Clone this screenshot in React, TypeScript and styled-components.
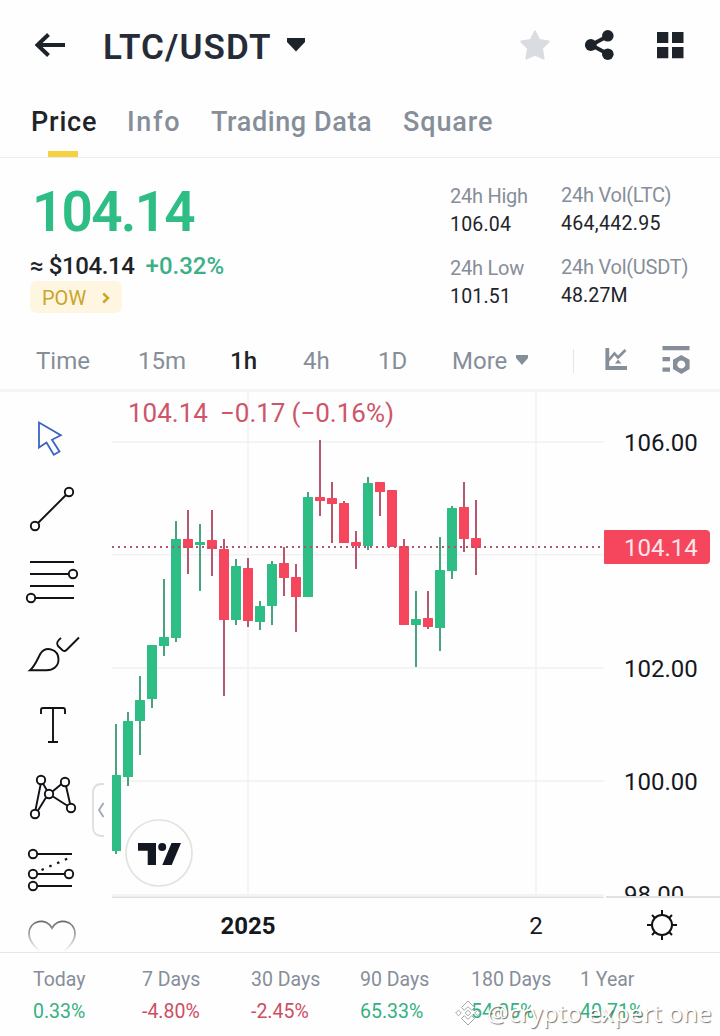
import React from "react";
import styled, { createGlobalStyle } from "styled-components";

const GREEN = "#2ebd85";
const RED = "#f6465d";
const INK = "#1e2329";
const MUTED = "#868e99";

const GlobalStyle = createGlobalStyle`
  * { box-sizing: border-box; }
  body { margin: 0; background: #fefefe; font-family: Roboto, "Liberation Sans", sans-serif; color: ${INK}; }
  svg { display: block; flex: none; }
`;

const Screen = styled.main`
  width: 720px;
  height: 1036px;
  overflow: hidden;
  display: flex;
  flex-direction: column;
  position: relative;
`;

/* ---------- header ---------- */
const Header = styled.header`
  height: 92px;
  display: flex;
  align-items: center;
  padding: 0 34px;
`;
const Pair = styled.h1`
  margin: 4px 0 0 37px;
  width: 181px;
  font-size: 35px;
  line-height: 40px;
  font-weight: 600;
  letter-spacing: 1.1px;
  color: #252c38;
  white-space: nowrap;
`;
const HeaderActions = styled.div`
  margin-left: auto;
  display: grid;
  grid-template-columns: 65px 70px 32px;
`;

/* ---------- tabs ---------- */
const Tabs = styled.nav`
  height: 66px;
  border-bottom: 1px solid #ececee;
  padding-left: 31px;
  display: grid;
  grid-template-columns: 96px 84px 192px auto;
`;
const Tab = styled.span<{ $active?: boolean; $ls: number }>`
  position: relative;
  justify-self: start;
  font-size: 27px;
  line-height: 60px;
  font-weight: 500;
  letter-spacing: ${(p) => p.$ls}px;
  color: ${(p) => (p.$active ? INK : MUTED)};
  &::after {
    content: "";
    display: ${(p) => (p.$active ? "block" : "none")};
    position: absolute;
    left: 17px;
    top: 59px;
    width: 30px;
    height: 6px;
    background: #f5d33f;
  }
`;

/* ---------- price overview ---------- */
const Overview = styled.section`
  height: 174px;
  padding: 20px 0 0 30px;
  display: grid;
  grid-template-columns: 420px 111px auto;
`;
const LastPrice = styled.div`
  font-size: 55px;
  line-height: 68px;
  font-weight: 600;
  font-stretch: 90%;
  letter-spacing: -1.8px;
  padding-left: 2px;
  color: ${GREEN};
`;
const FiatLine = styled.div`
  margin-top: 5px;
  height: 30px;
  line-height: 30px;
  font-size: 24px;
  font-weight: 500;
  display: flex;
  gap: 11px;
  white-space: nowrap;
`;
const Fiat = styled.span`
  letter-spacing: -0.4px;
`;
const Change = styled.span`
  color: #3db088;
`;
const PowTag = styled.div`
  width: 92px;
  height: 32px;
  border-radius: 7px;
  background: #fef6e0;
  color: #cba42b;
  font-size: 20px;
  display: flex;
  align-items: center;
  justify-content: space-between;
  padding: 1px 11px 0 12px;
`;
const StatColumn = styled.dl<{ $top: number }>`
  margin: 0;
  padding-top: ${(p) => p.$top}px;
  white-space: nowrap;
`;
const StatLabel = styled.dt`
  font-size: 20px;
  line-height: 28px;
  color: ${MUTED};
  letter-spacing: -0.25px;
`;
const StatValue = styled.dd<{ $ls?: number }>`
  margin: 1px 0 15px;
  font-size: 19.5px;
  line-height: 28px;
  letter-spacing: ${(p) => p.$ls ?? 0}px;
`;

/* ---------- time frames ---------- */
const Frames = styled.nav`
  height: 60px;
  padding-left: 36px;
  border-bottom: 3px solid #f5f5f5;
  display: grid;
  grid-template-columns: 102px 92px 73px 75px 74px 121px 29px 57px auto;
  align-items: center;
  font-size: 24px;
  color: ${MUTED};
`;
const Frame = styled.span<{ $active?: boolean }>`
  display: flex;
  align-items: center;
  gap: 8px;
  white-space: nowrap;
  font-weight: ${(p) => (p.$active ? 500 : 400)};
  color: ${(p) => (p.$active ? INK : MUTED)};
`;
const Divider = styled.i`
  width: 1px;
  height: 24px;
  background: #e3e5e8;
`;

/* ---------- chart ---------- */
const ChartArea = styled.section`
  height: 561px;
  border-bottom: 1px solid #e6e7e9;
  display: grid;
  grid-template-columns: 112px 492px 116px;
  grid-template-rows: 506px 54px;
`;
const Toolbar = styled.aside`
  grid-row: 1 / 3;
  padding: 10px 0 0 24px;
  overflow: hidden;
  position: relative;
`;
const Handle = styled.div`
  position: absolute;
  left: 91px;
  top: 390px;
`;
const Plot = styled.div`
  position: relative;
  overflow: hidden;
`;
const Quote = styled.div`
  position: absolute;
  left: 16px;
  top: 3px;
  font-size: 26px;
  line-height: 36px;
  color: #cd566a;
  white-space: nowrap;
  display: flex;
`;
const QuoteValue = styled.span<{ $gap?: number }>`
  margin-left: ${(p) => p.$gap ?? 0}px;
`;
const PriceAxis = styled.div`
  position: relative;
  overflow: hidden;
  margin-left: 2px;
  border-bottom: 2px solid #dfe1e2;
`;
const AxisPrice = styled.div`
  height: 113px;
  line-height: 113px;
  padding-left: 18px;
  font-size: 24px;
  color: #16181e;
  &:first-child { margin-top: -5px; }
`;
const PriceTagCell = styled.div`
  position: relative;
  display: grid;
`;
const PriceTag = styled.div`
  position: absolute;
  left: 0;
  top: 138px;
  width: 106px;
  height: 34px;
  line-height: 37px;
  padding-left: 20px;
  font-size: 24px;
  color: #fde6ea;
  background: ${RED};
  border-radius: 1px 4px 4px 1px;
`;
const TimeAxis = styled.div`
  display: grid;
  grid-template-columns: 272px 304px;
  margin-right: -84px;
  line-height: 57px;
  font-size: 24px;
  text-align: center;
  color: #16181e;
`;
const TimeMark = styled.span<{ $bold?: boolean }>`
  font-weight: ${(p) => (p.$bold ? 700 : 400)};
`;
const AxisSettings = styled.div`
  display: grid;
  place-items: center;
`;

/* ---------- performance footer ---------- */
const Performance = styled.footer`
  flex: 1;
  padding: 11px 0 0 33px;
  display: grid;
  grid-template-columns: 109px 109px 109px 111px 109px auto;
  grid-template-rows: 32px 32px;
  grid-auto-flow: column;
  line-height: 32px;
  white-space: nowrap;
`;
const Period = styled.span`
  font-size: 19.5px;
  color: ${MUTED};
`;
const Return = styled.span<{ $down?: boolean }>`
  font-size: 19.5px;
  color: ${(p) => (p.$down ? "#cd4e63" : "#36b083")};
`;
const Watermark = styled.div`
  position: absolute;
  left: 455px;
  top: 997px;
  height: 32px;
  display: flex;
  align-items: center;
  gap: 6px;
  font-family: "Noto Sans", sans-serif;
  font-size: 24px;
  letter-spacing: 0.2px;
  line-height: 32px;
  color: #fff;
  text-shadow: 1px 1px 1px rgba(70, 70, 70, 0.75);
  white-space: nowrap;
`;

type Candle = [dir: "u" | "d", high: number, top: number, bottom: number, low: number];
const candles: Candle[] = [
  ["u", 724, 775, 851, 854],
  ["u", 712, 721, 777, 786],
  ["u", 676, 700, 721, 755],
  ["u", 645, 645, 699, 708],
  ["u", 579, 637, 646, 656],
  ["u", 521, 539, 638, 642],
  ["d", 510, 539, 548, 574],
  ["u", 524, 542, 545, 591],
  ["d", 510, 540, 549, 576],
  ["d", 539, 549, 620, 696],
  ["u", 559, 566, 620, 625],
  ["d", 558, 568, 621, 627],
  ["u", 601, 606, 622, 630],
  ["u", 561, 564, 606, 625],
  ["d", 547, 563, 578, 596],
  ["d", 564, 577, 597, 632],
  ["u", 492, 497, 597, 597],
  ["d", 440, 497, 501, 516],
  ["d", 482, 498, 504, 543],
  ["d", 501, 503, 543, 543],
  ["d", 531, 542, 546, 569],
  ["u", 477, 483, 546, 550],
  ["d", 482, 482, 492, 516],
  ["d", 490, 490, 547, 547],
  ["d", 539, 546, 625, 625],
  ["u", 591, 619, 625, 667],
  ["d", 591, 618, 627, 629],
  ["u", 537, 570, 628, 651],
  ["u", 506, 508, 571, 579],
  ["d", 482, 507, 539, 552],
  ["d", 500, 538, 548, 575],
];

const CandleChart = () => (
  <svg width="492" height="506" viewBox="112 392 492 506">
    <g stroke="#f1f1f2" strokeWidth="1.4">
      {[442, 554.7, 668, 781, 895].map((y) => (
        <path key={y} d={`M112 ${y}H604`} />
      ))}
      <path d="M248 392V896M536 392V896" />
    </g>
    <path d="M112 897.5H603.5" stroke="#dcdedf" strokeWidth="1.8" />
    {candles.map(([dir, high, top, bottom, low], i) => {
      const x = 116 + i * 12;
      return (
        <g key={i}>
          <rect x={x - 1} y={high} width="2" height={low - high} fill={dir === "u" ? "#49a37d" : "#b5586d"} />
          <rect x={x - 5} y={top} width="10" height={bottom - top} rx="0.6" fill={dir === "u" ? GREEN : RED} />
        </g>
      );
    })}
    <path d="M112 547H602" stroke="#b0566a" strokeWidth="1.8" strokeDasharray="2 4" />
    <circle cx="159" cy="853" r="33" fill="#fefefe" stroke="#e1e2e2" strokeWidth="1.7" />
    <g fill="#131722">
      <path d="M138 843h18v22h-8.3v-14.3H138z" />
      <circle cx="162.2" cy="847" r="4" />
      <path d="M171.5 843h9.5l-9.3 22h-9.4z" />
    </g>
  </svg>
);

/* Each drawing tool fills a 60x72 slot of the side toolbar. */
const Tool = ({ slot, height = 72, children }: { slot: number; height?: number; children: React.ReactNode }) => (
  <svg
    width="60"
    height={height}
    viewBox={`24 ${402 + slot * 72} 60 ${height}`}
    fill="none"
    stroke="#101216"
    strokeWidth="1.9"
  >
    {children}
  </svg>
);

const tabs = [
  { label: "Price", ls: 0.8, active: true },
  { label: "Info", ls: 1.7 },
  { label: "Trading Data", ls: 0.6 },
  { label: "Square", ls: 0.9 },
];

const performance = [
  { period: "Today", value: "0.33%" },
  { period: "7 Days", value: "-4.80%", down: true },
  { period: "30 Days", value: "-2.45%", down: true },
  { period: "90 Days", value: "65.33%" },
  { period: "180 Days", value: "54.05%" },
  { period: "1 Year", value: "40.71%" },
];

export default function App() {
  return (
    <Screen>
      <GlobalStyle />
      <Header>
        <svg width="32" height="40" viewBox="34 26 32 40" fill="none" stroke={INK} strokeWidth="4">
          <path d="M65 45H38M48.5 34.5L37.5 45L48.5 55.5" />
        </svg>
        <Pair>LTC/USDT</Pair>
        <svg width="22" height="40" viewBox="284 26 22 40" fill={INK}>
          <path d="M287 38h18v4l-9 9.5l-9-9.5z" />
        </svg>
        <HeaderActions>
          <svg width="32" height="40" viewBox="519 26 32 40">
            <path
              d="M535 31.500l4.300 8.600l9.400 1.400l-6.800 6.900l1.700 10.200l-8.600-4l-8.600 4l1.700-10.200l-6.800-6.900l9.400-1.400z"
              fill="#d9dce1"
              stroke="#d9dce1"
              strokeWidth="2"
              strokeLinejoin="round"
            />
          </svg>
          <svg width="32" height="40" viewBox="584 26 32 40" fill={INK}>
            <path d="M608 36L591 45L608 54" fill="none" stroke={INK} strokeWidth="3.8" />
            <circle cx="607.8" cy="35.8" r="5.8" />
            <circle cx="590.8" cy="45" r="5.9" />
            <circle cx="607.8" cy="54.2" r="5.8" />
          </svg>
          <svg width="32" height="40" viewBox="654 26 32 40" fill={INK}>
            <path d="M657 32h11.3v11h-11.3zM672 32h11.5v11h-11.5zM657 47h11.3v11.3h-11.3zM672 47h11.5v11.3h-11.5z" />
          </svg>
        </HeaderActions>
      </Header>

      <Tabs>
        {tabs.map((t) => (
          <Tab key={t.label} $active={t.active} $ls={t.ls}>
            {t.label}
          </Tab>
        ))}
      </Tabs>

      <Overview>
        <div>
          <LastPrice>104.14</LastPrice>
          <FiatLine>
            <Fiat>≈ $104.14</Fiat>
            <Change>+0.32%</Change>
          </FiatLine>
          <PowTag>
            POW
            <svg width="10" height="12" viewBox="0 0 10 12" fill="none" stroke="#cba42b" strokeWidth="2.4">
              <path d="M2.2 1.5L7 6L2.2 10.5" />
            </svg>
          </PowTag>
        </div>
        <StatColumn $top={4}>
          <StatLabel>24h High</StatLabel>
          <StatValue $ls={0.2}>106.04</StatValue>
          <StatLabel>24h Low</StatLabel>
          <StatValue $ls={0.2}>101.51</StatValue>
        </StatColumn>
        <StatColumn $top={3}>
          <StatLabel>24h Vol(LTC)</StatLabel>
          <StatValue $ls={0.3}>464,442.95</StatValue>
          <StatLabel>24h Vol(USDT)</StatLabel>
          <StatValue $ls={0.1}>48.27M</StatValue>
        </StatColumn>
      </Overview>

      <Frames>
        <Frame>Time</Frame>
        <Frame>15m</Frame>
        <Frame $active>1h</Frame>
        <Frame>4h</Frame>
        <Frame>1D</Frame>
        <Frame>
          More
          <svg width="14" height="14" viewBox="0 0 14 14" fill={MUTED}>
            <path d="M1 1h12v3L7 11L1 4z" />
          </svg>
        </Frame>
        <Divider />
        <svg width="28" height="34" viewBox="602 344 28 34" fill="none" stroke={MUTED}>
          <path d="M607.3 348V368H627" strokeWidth="3.800" />
          <path d="M608 361L614.500 353.500L618 357.500L625.500 350" strokeWidth="2.600" />
          <path d="M615 363.500L618 359.500L621.500 363.500z" fill={MUTED} stroke="none" />
        </svg>
        <svg width="34" height="34" viewBox="659 344 34 34" fill={MUTED}>
          <path d="M662.500 346h27v4.200h-27zM662.500 357h7.500v4.200h-7.500zM662.500 367.500h7.500v4.200h-7.500z" />
          <path
            fillRule="evenodd"
            d="M681.300 355l8.300 4.700v9.400l-8.300 4.800l-8.300-4.800v-9.400zM681.300 360.500a4 4 0 1 0 0.010 0z"
          />
        </svg>
      </Frames>

      <ChartArea>
        <Toolbar>
          <Tool slot={0}>
            <path
              d="M39 422.500V447.500L46.500 442.500L53.800 454.700L59.500 451.500L52 439.800L60.800 435.200z"
              stroke="#3c64c4"
              strokeWidth="1.800"
            />
          </Tool>
          <Tool slot={1}>
            <path d="M38 523L66 495" />
            <circle cx="69" cy="492" r="4.200" />
            <circle cx="35" cy="526" r="4.200" />
          </Tool>
          <Tool slot={2}>
            <path d="M30 562H74M30 574H68.500M30 586H74M35.500 598H74" />
            <circle cx="73" cy="574" r="4.200" />
            <circle cx="31" cy="598" r="4.200" />
          </Tool>
          <Tool slot={3}>
            <path d="M30 670.300C35 666 37.500 659 40.500 653.500C46 645.500 58.500 649 58.500 659.500C58.500 666.500 53 670.300 46.500 670.300z" />
            <path d="M61 638C57.500 640.500 56 643.500 58 646L62.500 650.200C64 651.200 65.500 651 66.500 650L79 637.500" />
          </Tool>
          <Tool slot={4}>
            <path d="M41 714V710Q41 708 43 708H63Q65 708 65 710V714M53 708V742M48 742H58" />
          </Tool>
          <Tool slot={5}>
            <path d="M40.700 784L35.500 810M43 783.500L47 790.500M52.500 791.500L61.500 784M53 796.500L67 805.500M66 786L70 803.500M46 797.500L38 810.500" />
            <circle cx="41" cy="780" r="4.200" />
            <circle cx="65" cy="782" r="4.200" />
            <circle cx="49" cy="794" r="4.200" />
            <circle cx="71" cy="808" r="4.200" />
            <circle cx="35" cy="814" r="4.200" />
          </Tool>
          <Tool slot={6}>
            <path d="M37.500 854H72M37.500 874H64.500M37.500 886H72" />
            <path d="M41.500 870L69 858" strokeDasharray="2.500 6" strokeWidth="2.200" />
            <circle cx="33" cy="854" r="4.200" />
            <circle cx="33" cy="874" r="4.200" />
            <circle cx="69" cy="874" r="4.200" />
            <circle cx="33" cy="886" r="4.200" />
          </Tool>
          <Tool slot={7} height={46}>
            <defs>
              <linearGradient id="fade" gradientUnits="userSpaceOnUse" x1="0" y1="918" x2="0" y2="952">
                <stop offset="0" stopColor="#5a5b5e" />
                <stop offset="1" stopColor="#fefefe" />
              </linearGradient>
            </defs>
            <path
              d="M52 928C47 917.500 29 919.500 29 934C29 942 36 948 52 963C68 948 75 942 75 934C75 919.500 57 917.500 52 928z"
              stroke="url(#fade)"
              strokeWidth="1.800"
            />
          </Tool>
          <Handle>
            <svg width="13" height="56" viewBox="91 782 13 56" fill="none">
              <path d="M104 784H102Q93 784 93 793V827Q93 836 102 836H104" stroke="#dcdee2" strokeWidth="1.800" />
              <path d="M103.500 803L99 810L103.500 817" stroke="#9fa9b3" strokeWidth="1.800" />
            </svg>
          </Handle>
        </Toolbar>

        <Plot>
          <CandleChart />
          <Quote>
            <QuoteValue>104.14</QuoteValue>
            <QuoteValue $gap={12}>−0.17</QuoteValue>
            <QuoteValue $gap={6}>(−0.16%)</QuoteValue>
          </Quote>
        </Plot>

        <PriceTagCell>
          <PriceAxis>
            <AxisPrice>106.00</AxisPrice>
            <AxisPrice />
            <AxisPrice>102.00</AxisPrice>
            <AxisPrice>100.00</AxisPrice>
            <AxisPrice>98.00</AxisPrice>
          </PriceAxis>
          <PriceTag>104.14</PriceTag>
        </PriceTagCell>

        <TimeAxis>
          <TimeMark $bold>2025</TimeMark>
          <TimeMark>2</TimeMark>
        </TimeAxis>
        <AxisSettings>
          <svg width="32" height="32" viewBox="-16 -16 32 32" fill="none" stroke="#101216" strokeWidth="2">
            <circle r="10" />
            <path d="M0-10V-15M0 10V15M-10 0H-15M10 0H15M-7.070-7.070L-10-10M7.070-7.070L10-10M-7.070 7.070L-10 10M7.070 7.070L10 10" />
          </svg>
        </AxisSettings>
      </ChartArea>

      <Performance>
        {performance.map((p) => (
          <React.Fragment key={p.period}>
            <Period>{p.period}</Period>
            <Return $down={p.down}>{p.value}</Return>
          </React.Fragment>
        ))}
      </Performance>

      <Watermark>
        <svg width="26" height="26" viewBox="0 0 26 26" fill="#fff" stroke="#999c9e" strokeWidth="0.900">
          <path d="M13 1l6.500 6.500l-2.800 2.800L13 6.600l-3.700 3.700l-2.800-2.800zM3.500 10.200l2.800 2.800l-2.800 2.800L0.700 13zM13 10.200l2.800 2.800l-2.800 2.800l-2.800-2.800zM22.500 10.200l2.800 2.800l-2.800 2.800l-2.800-2.800zM6.500 18.500l2.800-2.800l3.700 3.700l3.700-3.700l2.800 2.800L13 25z" />
        </svg>
        @crypto expert one
      </Watermark>
    </Screen>
  );
}
